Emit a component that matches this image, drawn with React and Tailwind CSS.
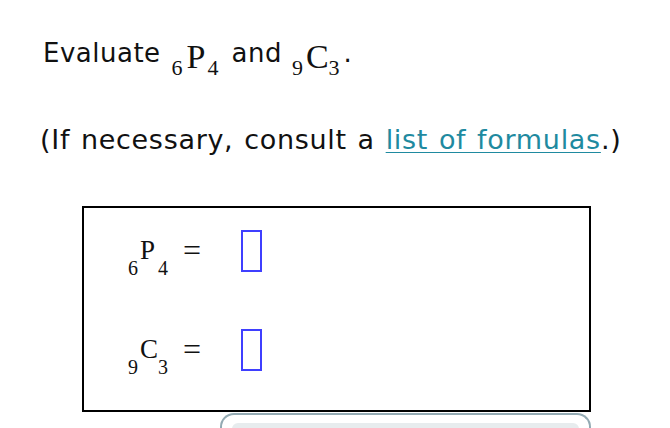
import React from "react";

const sans = "font-['DejaVu_Sans',Verdana,sans-serif]";
const serif = "font-['Liberation_Serif','Times_New_Roman',serif]";

function Row({ pre, sym, sub, height, subGap }) {
  return (
    <div className={`${serif} text-[27px] leading-[40px] whitespace-nowrap ${height}`}>
      <span className="text-[20px] leading-none align-[-16px]">{pre}</span>
      <span className="ml-[2px] text-[27px] leading-none">{sym}</span>
      <span className={`${subGap} text-[20px] leading-none align-[-16px]`}>{sub}</span>
      <span className="ml-[15px] text-[32px] leading-none align-[-2px]">=</span>
      <span className="inline-block ml-[40px] w-[21px] h-[42px] border-2 border-[#3f3fff] align-[-13px]"></span>
    </div>
  );
}

export default function App() {
  return (
    <div className={`bg-white w-[670px] h-[428px] overflow-hidden pl-[40px] pt-[37px] text-[#111] ${sans}`}>
      <div className="h-[87px] pl-[3px] text-[26px] leading-[32px] whitespace-nowrap">
        <span className="tracking-[0.5px]">Evaluate</span>
        <span className={serif}>
          <span className="ml-[11px] text-[22px] leading-none align-[-13px]">6</span>
          <span className="ml-[4px] text-[34px] leading-none align-[-6px]">P</span>
          <span className="ml-[2px] text-[22px] leading-none align-[-13px]">4</span>
        </span>
        <span className="ml-[13px] tracking-[0.5px]">and</span>
        <span className={serif}>
          <span className="ml-[10px] text-[22px] leading-none align-[-13px]">9</span>
          <span className="ml-[3px] text-[34px] leading-none align-[-6px]">C</span>
          <span className="text-[22px] leading-none align-[-13px]">3</span>
        </span>
        <span className="ml-[4px]">.</span>
      </div>
      <div className="h-[32px] text-[27px] leading-[32px] whitespace-nowrap tracking-[0.7px] [word-spacing:1.5px]">
        (If necessary, consult a{" "}
        <span className="text-[#1f8aa0] underline decoration-1 underline-offset-[3px]">list of formulas</span>.)
      </div>
      <div className="mt-[50px] ml-[42px] w-[509px] h-[206px] border-2 border-black pl-[44px] pt-[22px]">
        <Row pre="6" sym="P" sub="4" height="h-[99px]" subGap="ml-[3px]" />
        <Row pre="9" sym="C" sub="3" height="h-[40px]" subGap="ml-0" />
      </div>
      <div className="mt-[1px] ml-[180px] w-[371px] h-[40px] border-2 border-b-0 border-[#93aab3] rounded-t-[14px] pt-[8px] px-[10px]">
        <div className="h-full bg-[#e7ecee] rounded-t-[6px]"></div>
      </div>
    </div>
  );
}
